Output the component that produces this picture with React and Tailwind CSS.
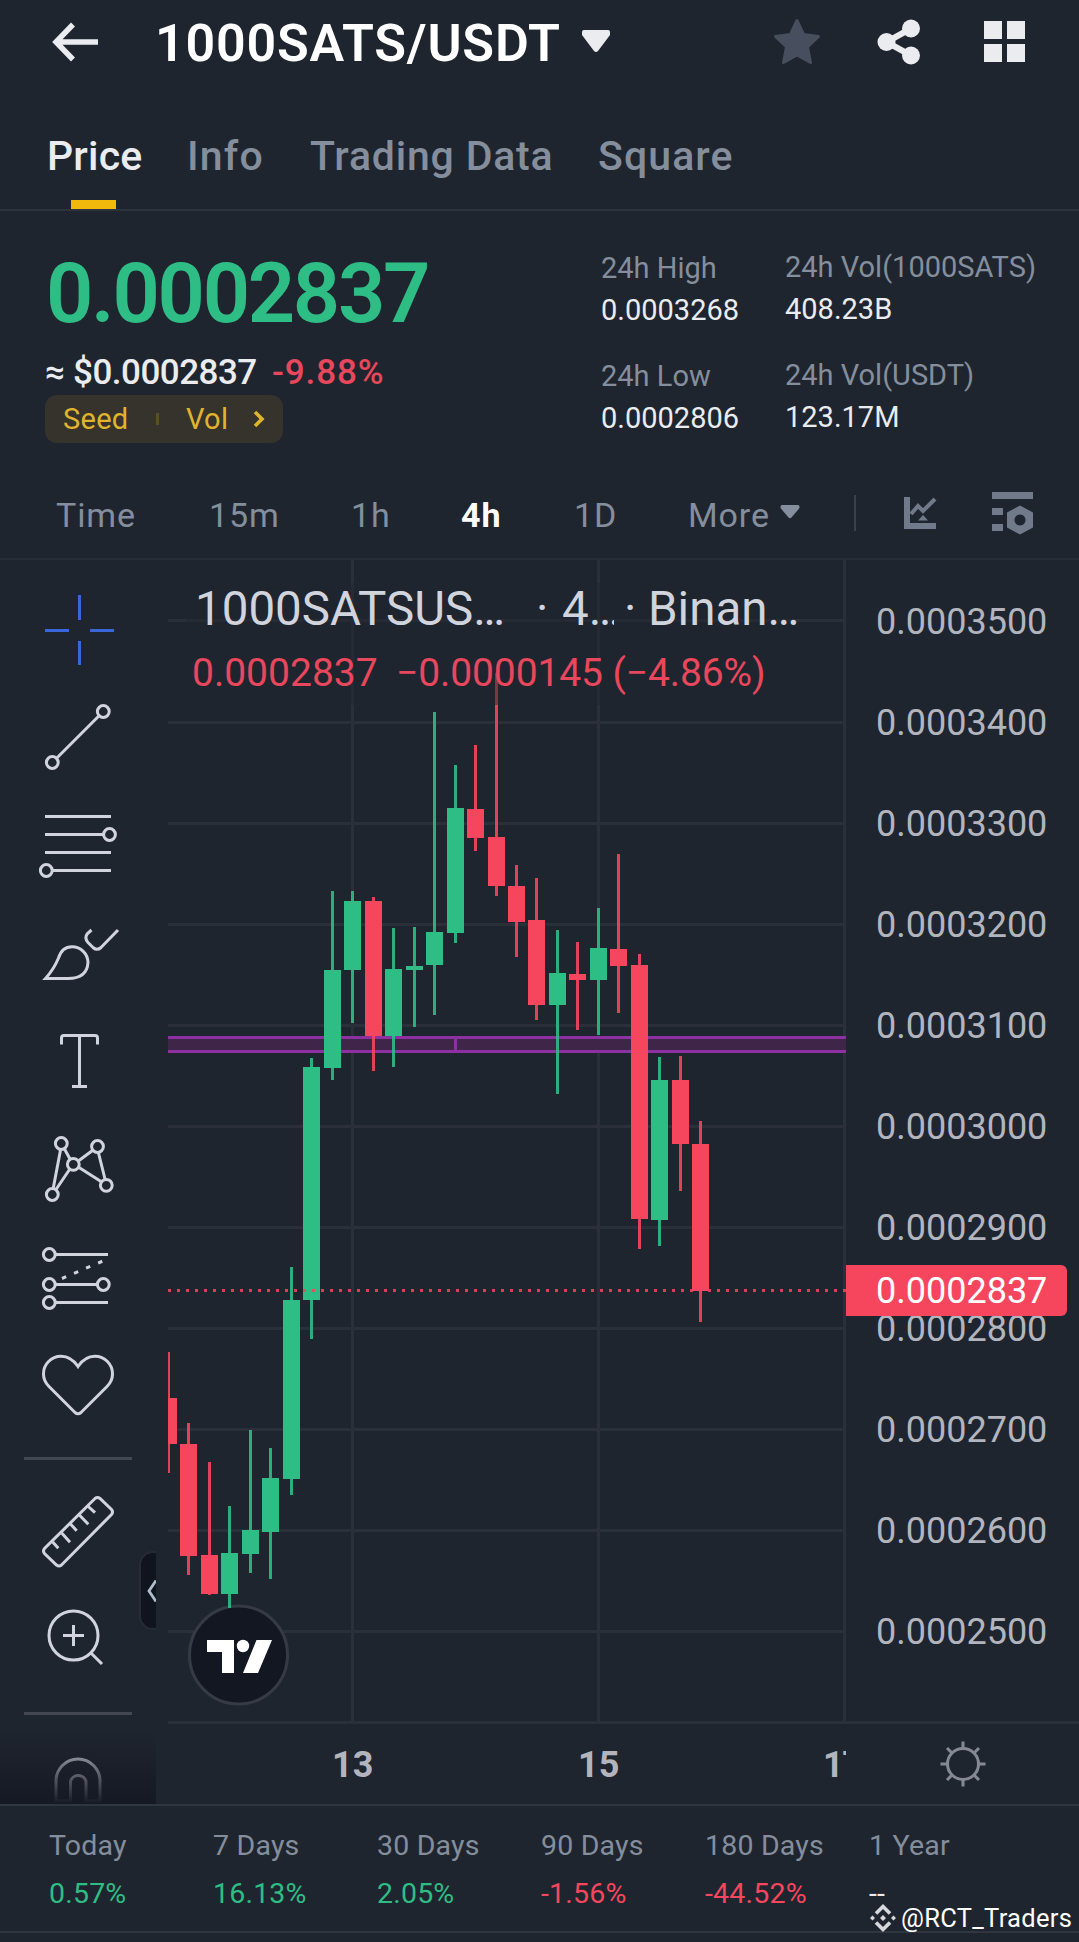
import React from 'react';

const UP = '#2ebd85';
const DOWN = '#f6465d';

const tabs = [
  { label: 'Price', cls: 'w-[140px] tracking-[0.2px] text-[#eaecef]', active: true },
  { label: 'Info', cls: 'w-[123px] tracking-[1.2px] text-[#848e9c]' },
  { label: 'Trading Data', cls: 'w-[288px] tracking-[0.8px] text-[#848e9c]' },
  { label: 'Square', cls: 'tracking-[1.1px] text-[#848e9c]' },
];

const priceLevels = [
  '0.0003500',
  '0.0003400',
  '0.0003300',
  '0.0003200',
  '0.0003100',
  '0.0003000',
  '0.0002900',
  '0.0002800',
  '0.0002700',
  '0.0002600',
  '0.0002500',
];

// [left, wick top, body top, body bottom, wick bottom, rising]
const candles = [
  [160, 1352, 1398, 1444, 1473, 0],
  [180, 1423, 1444, 1556, 1575, 0],
  [201, 1462, 1555, 1594, 1595, 0],
  [221, 1506, 1553, 1594, 1608, 1],
  [242, 1430, 1530, 1554, 1573, 1],
  [262, 1448, 1478, 1532, 1579, 1],
  [283, 1267, 1300, 1479, 1495, 1],
  [303, 1058, 1067, 1300, 1339, 1],
  [324, 891, 970, 1068, 1080, 1],
  [344, 891, 901, 970, 1023, 1],
  [365, 897, 901, 1036, 1071, 0],
  [385, 928, 969, 1036, 1067, 1],
  [406, 927, 966, 970, 1027, 1],
  [426, 712, 932, 965, 1015, 1],
  [447, 765, 808, 933, 943, 1],
  [467, 745, 809, 838, 851, 0],
  [488, 673, 837, 886, 896, 0],
  [508, 865, 886, 922, 957, 0],
  [528, 878, 920, 1005, 1020, 0],
  [549, 930, 973, 1005, 1094, 1],
  [569, 942, 974, 980, 1030, 0],
  [590, 908, 948, 980, 1035, 1],
  [610, 854, 949, 966, 1013, 0],
  [631, 954, 965, 1219, 1249, 0],
  [651, 1057, 1080, 1220, 1246, 1],
  [672, 1056, 1080, 1144, 1191, 0],
  [692, 1121, 1144, 1291, 1322, 0],
];

const performance = [
  { label: 'Today', value: '0.57%', cls: 'text-[#2ebd85]' },
  { label: '7 Days', value: '16.13%', cls: 'text-[#2ebd85]' },
  { label: '30 Days', value: '2.05%', cls: 'text-[#2ebd85]' },
  { label: '90 Days', value: '-1.56%', cls: 'text-[#f6465d]' },
  { label: '180 Days', value: '-44.52%', cls: 'text-[#f6465d]' },
  { label: '1 Year', value: '--', cls: 'text-[#eaecef]' },
];

const Header = () => (
  <header className="flex h-[83px] items-center pl-[50px] text-[#eaecef]">
    <svg className="h-[48px] w-[50px]" viewBox="50 17 50 48" fill="none" stroke="currentColor" strokeWidth="5.5">
      <path d="M98 41H58M73 23.500L56 41l17 17.500" />
    </svg>
    <h1 className="ml-[55px] w-[405px] whitespace-nowrap pt-[5px] text-[52px] font-semibold leading-[60px] tracking-[0.8px] text-white">
      1000SATS/USDT
    </h1>
    <svg className="ml-[20px] h-[24px] w-[32px]" viewBox="580 30 32 24" fill="currentColor">
      <path d="M584 30h24q2 0 2 2v3l-12 16q-2 2-4 0l-12-16v-3q0-2 2-2z" />
    </svg>
    <svg className="ml-[159px] h-[48px] w-[50px] text-[#474f5e]" viewBox="771 17 50 48" fill="currentColor" stroke="currentColor" strokeWidth="3" strokeLinejoin="round">
      <path d="M797 19.500l6.500 14 15 2-11 10.500 3 15.500-13.500-7.500-13.500 7.500 3-15.500-11-10.500 15-2z" />
    </svg>
    <svg className="ml-[54px] h-[48px] w-[48px]" viewBox="875 17 48 48" fill="currentColor">
      <circle cx="911" cy="27.500" r="9" />
      <circle cx="911" cy="54.500" r="9" />
      <circle cx="886.500" cy="41" r="9" />
      <path d="M911 27.500L886.500 41l24.500 13.500" fill="none" stroke="currentColor" strokeWidth="6" />
    </svg>
    <div className="ml-[61px] grid grid-cols-[18px_18px] gap-[5px]">
      <span className="h-[18px] bg-[#eaecef]" />
      <span className="h-[18px] bg-[#eaecef]" />
      <span className="h-[18px] bg-[#eaecef]" />
      <span className="h-[18px] bg-[#eaecef]" />
    </div>
  </header>
);

const Tabs = () => (
  <nav className="flex h-[128px] border-b-2 border-[#2d333d] pl-[47px] pt-[48px] text-[41px] font-medium leading-[50px]">
    {tabs.map((tab) => (
      <div key={tab.label} className={`flex shrink-0 flex-col justify-between ${tab.cls}`}>
        <span className="whitespace-nowrap">{tab.label}</span>
        {tab.active && <span className="ml-[24px] h-[9px] w-[45px] bg-[#f0b90b]" />}
      </div>
    ))}
  </nav>
);

const Stat = ({ label, value }) => (
  <div className="leading-[42px]">
    <div className="whitespace-nowrap text-[#848e9c]">{label}</div>
    <div className="whitespace-nowrap text-[#eaecef]">{value}</div>
  </div>
);

const Summary = () => (
  <section className="flex h-[261px] text-[29px]">
    <div className="w-[601px] pl-[45px] pt-[43px]">
      <div className="pl-[1px] text-[83px] font-semibold leading-[80px] tracking-[-2.3px] text-[#2ebd85]">0.0002837</div>
      <div className="mt-[16px] flex text-[35px] font-medium leading-[45px]">
        <span className="w-[28px] text-[#eaecef]">≈</span>
        <span className="w-[199px] tracking-[-0.5px] text-[#eaecef]">$0.0002837</span>
        <span className="tracking-[0.9px] text-[#e8475c]">-9.88%</span>
      </div>
      <div className="flex h-[48px] w-[238px] items-center rounded-[12px] bg-[#35332c] pl-[18px] text-[#e0b42d]">
        <span className="w-[93px] pt-[2px] tracking-[0.3px]">Seed</span>
        <span className="h-[12px] w-[3px] bg-[#5b4f2a]" />
        <span className="ml-[27px] w-[67px] pt-[2px] tracking-[0.3px]">Vol</span>
        <svg className="h-[18px] w-[12px]" viewBox="0 0 12 18" fill="none" stroke="currentColor" strokeWidth="3.600">
          <path d="M2 2l7 7-7 7" />
        </svg>
      </div>
    </div>
    <div className="flex w-[184px] flex-col gap-[24px] pt-[36px]">
      <Stat label="24h High" value="0.0003268" />
      <Stat label="24h Low" value="0.0002806" />
    </div>
    <div className="flex flex-col gap-[24px] pt-[35px]">
      <Stat label="24h Vol(1000SATS)" value="408.23B" />
      <Stat label="24h Vol(USDT)" value="123.17M" />
    </div>
  </section>
);

const IntervalBar = () => (
  <div className="flex h-[88px] items-center border-b-2 border-[#272d37] pl-[56px] text-[34px] tracking-[0.9px] text-[#848e9c]">
    <span className="w-[153px]">Time</span>
    <span className="w-[142px]">15m</span>
    <span className="w-[110px]">1h</span>
    <span className="w-[113px] font-bold text-white">4h</span>
    <span className="w-[114px]">1D</span>
    <span className="w-[92px]">More</span>
    <svg className="mb-[7px] h-[14px] w-[20px]" viewBox="780 505 20 14" fill="currentColor">
      <path d="M782 505h16q1.500 0 1.500 2v1l-8 9.500q-1.500 1.500-3 0l-8-9.500v-1q0-2 1.500-2z" />
    </svg>
    <span className="mb-[5px] ml-[54px] h-[36px] w-[2px] bg-[#3a414c]" />
    <svg className="mb-[5px] ml-[46px] h-[36px] w-[36px] text-[#717a8a]" viewBox="903 494 36 36" fill="currentColor">
      <path d="M905 496h6v26h26v6h-32z" />
      <path d="M912 513l7-8 5 5 12-12" fill="none" stroke="currentColor" strokeWidth="4" />
      <path d="M924 514l5 5.500h-10z" />
    </svg>
    <svg className="mb-[4px] ml-[52px] h-[44px] w-[46px] text-[#717a8a]" viewBox="991 491 46 44" fill="currentColor">
      <path d="M993 492h41v7h-41zM993 508h11v7h-11zM993 524h11v7h-11z" />
      <path d="M1021 505.500l13 7v15l-13 7-13-7v-15zM1021 514.500a5.500 5.500 0 1 0 .01 0z" fillRule="evenodd" />
    </svg>
  </div>
);

const Node = ({ x, y }) => <circle cx={x} cy={y} r="5.900" />;

const Toolbar = () => (
  <aside className="relative flex h-full w-[156px] flex-col overflow-hidden">
    <svg className="h-[1244px] w-[156px]" viewBox="0 560 156 1244" fill="none" stroke="#d1d4dc" strokeWidth="3">
      {/* crosshair */}
      <path d="M79.500 595v25M79.500 641v24M45 630.500h24M90 630.500h24" stroke="#3a66db" />
      {/* trend line */}
      <Node x="103.300" y="711.500" />
      <Node x="52.300" y="762.500" />
      <path d="M56.800 758L98.800 716" />
      {/* fib retracement */}
      <path d="M45 816.500h66M45 834.500h58.500M45 852.500h66M52.500 870.500H111" />
      <Node x="109.500" y="834.500" />
      <Node x="46.300" y="870.500" />
      {/* brush */}
      <path d="M91.500 930L87.500 933.500Q84 938 88 942.500L93 947.500Q97 951 101 947.500L118 930" />
      <path d="M45.500 978.500Q54 969 58.500 958Q62 946.700 72 946.700A16 16 0 0 1 88 962.500Q87 978.500 68 978.500Z" />
      {/* text */}
      <path d="M61.500 1044.500V1038Q61.500 1035.500 64 1035.500H95Q97.500 1035.500 97.500 1038V1044.500M79.500 1035.500V1086.500M72 1086.500H87" />
      {/* pattern */}
      <Node x="61.300" y="1143.500" />
      <Node x="97.500" y="1146.500" />
      <Node x="73.300" y="1164.300" />
      <Node x="106.300" y="1185.300" />
      <Node x="52.300" y="1194.500" />
      <path d="M64.500 1149L70 1159M79 1160.500L92.500 1150.500M98.500 1153L105 1179M79 1167.500L101 1181.500M69.500 1169.500L56 1189.500M60.500 1150L53.300 1188" />
      {/* projection */}
      <Node x="49.300" y="1254.500" />
      <Node x="49.300" y="1284.500" />
      <Node x="103.300" y="1284.500" />
      <Node x="49.300" y="1302.500" />
      <path d="M56 1254.500H108M56 1284.500H97M56 1302.500H108" />
      <path d="M62 1278.500L104 1260.500" strokeDasharray="4.500 8.600" />
      {/* favourites */}
      <path d="M78 1366.500C73 1359 67 1356.300 61 1356.300A17.500 17.500 0 0 0 43.500 1374Q43.500 1381 49 1386.500L75 1412.500Q78 1415 81 1412.500L107 1386.500Q112.500 1381 112.500 1374A17.500 17.500 0 0 0 95 1356.300C89 1356.300 83 1359 78 1366.500Z" />
      <path d="M24 1458.500H132" stroke="#434751" />
      {/* ruler */}
      <path d="M95 1498.500Q97.500 1496.500 100 1498.500L111.500 1509.500Q113.500 1512 111.500 1514.500L61.500 1565Q59 1567 56.500 1565L44.500 1553.500Q42.500 1551 44.500 1548.500Z" />
      <path d="M87.700 1506L95 1512.700M79.300 1515L88.300 1524.300M70 1523.500L76.700 1530.700M61.700 1533L70 1542.300M52.700 1542L58.300 1548.300" />
      {/* zoom in */}
      <circle cx="73.500" cy="1635.500" r="24.500" />
      <path d="M63 1635.500H84M73.500 1625V1646M90.700 1652.700L102 1664" />
      <path d="M24 1713.500H132" stroke="#434751" />
      {/* magnet */}
      <path d="M56 1801V1781A22 22 0 0 1 100 1781V1801H86V1781.500A8 8 0 0 0 70.500 1781.500V1801Z" />
    </svg>
    <div className="absolute bottom-0 left-0 h-[76px] w-[156px] bg-linear-to-b from-[#151924]/0 to-[#151924]" />
    <div className="absolute left-[139px] top-[991px] flex h-[79px] w-[30px] items-center rounded-l-[14px] border-2 border-[#262b35] bg-[#10141f] pl-[6px]">
      <svg className="h-[24px] w-[12px]" viewBox="0 0 12 24" fill="none" stroke="#adbfca" strokeWidth="2.800">
        <path d="M9 1.500L2 12l7 10.500" />
      </svg>
    </div>
  </aside>
);

const Candle = ({ candle }) => {
  const [x, high, top, bottom, low, rising] = candle;
  const color = rising ? UP : DOWN;
  return (
    <g fill={color}>
      <rect x={x + 7} y={high} width="3" height={low - high} opacity="0.9" />
      <rect x={x} y={top} width="17" height={bottom - top} />
    </g>
  );
};

const Plot = () => (
  <svg className="h-[1164px] w-[678px]" viewBox="168 560 678 1164">
    <g fill="#2a2f39">
      {priceLevels.map((level, i) => (
        <rect key={level} x="168" y={Math.round(619.4 + i * 101.1)} width="678" height="3" />
      ))}
      <rect x="351" y="560" width="3" height="1162" />
      <rect x="597" y="560" width="3" height="1162" />
      <rect x="843" y="560" width="3" height="1162" />
      <rect x="168" y="1721" width="678" height="3" />
    </g>
    <circle cx="238.500" cy="1655" r="49" fill="#131722" stroke="#363a45" strokeWidth="3" />
    <g fill="#ffffff">
      <path d="M207 1640h27v33h-12v-21h-15z" />
      <circle cx="243" cy="1646" r="6.200" />
      <path d="M256.500 1640H272L258 1673H243z" />
    </g>
    <rect x="168" y="1037" width="678" height="15" fill="#3f2548" />
    <g fill="#8d30a2">
      <rect x="168" y="1036" width="678" height="3" />
      <rect x="168" y="1050" width="678" height="3" />
      <rect x="454" y="1038" width="3" height="13" />
    </g>
    {candles.map((candle) => (
      <Candle key={candle[0]} candle={candle} />
    ))}
    <path d="M168 1290.500H846" stroke={DOWN} strokeWidth="3" strokeDasharray="3 6" opacity="0.85" />
    <rect x="186" y="583" width="610" height="122" fill="#1f252f" opacity="0.5" />
  </svg>
);

const Legend = () => (
  <div className="absolute left-[24px] top-[21px] whitespace-nowrap">
    <div className="flex pl-[3px] text-[47.500px] leading-[56px] text-[#d1d4dc]">
      <span className="w-[341px]">1000SATSUS…</span>
      <span className="w-[26px]">·</span>
      <span className="w-[52px] overflow-hidden">4…</span>
      <span className="ml-[10px] w-[24px]">·</span>
      <span>Binan…</span>
    </div>
    <div className="mt-[8px] flex text-[39px] leading-[56px] text-[#e8475c]">
      <span className="w-[204px]">0.0002837</span>
      <span className="tracking-[-0.1px]">−0.0000145 (−4.86%)</span>
    </div>
  </div>
);

const Chart = () => (
  <section className="flex h-[1244px]">
    <Toolbar />
    <div className="relative ml-[12px] flex w-[678px] flex-col overflow-hidden">
      <Plot />
      <Legend />
      <div className="flex h-[80px] items-center pt-[2px] text-[36px] font-bold text-[#b2b5be]">
        <span className="ml-[164px] w-[41px] text-center">13</span>
        <span className="ml-[205px] w-[41px] text-center">15</span>
        <span className="ml-[204px] w-[41px] shrink-0 tracking-[-1.5px]">17</span>
      </div>
    </div>
    <div className="relative flex w-[233px] flex-col text-[36px] text-[#b2b5be]">
      <div className="h-[1164px] border-b-[3px] border-[#2a2f39] pl-[30px] pt-[11px]">
        {priceLevels.map((level) => (
          <div key={level} className="flex h-[101.1px] items-center">
            {level}
          </div>
        ))}
      </div>
      <div className="absolute left-0 top-[705px] flex h-[51px] w-[221px] items-center rounded-r-[6px] bg-[#f6465d] pl-[30px] pt-[1px] text-white">
        0.0002837
      </div>
      <div className="flex h-[80px] items-center pl-[94px]">
        <svg className="h-[46px] w-[46px]" viewBox="-23 -23 46 46" fill="none" stroke="#868993" strokeWidth="3">
          <circle r="15.500" />
          <path d="M0-15.500V-22.500M0 15.500V22.500M-15.500 0H-22.500M15.500 0H22.500M-11-11l-5-5M11-11l5-5M-11 11l-5 5M11 11l5 5" />
        </svg>
      </div>
    </div>
  </section>
);

const Performance = () => (
  <footer className="flex h-[129px] border-y-2 border-[#2f3640] pl-[49px] pt-[16px] text-[28.500px] leading-[48px] tracking-[0.2px]">
    {performance.map((item) => (
      <div key={item.label} className="w-[164px] shrink-0 whitespace-nowrap">
        <div className="text-[#848e9c]">{item.label}</div>
        <div className={item.cls}>{item.value}</div>
      </div>
    ))}
  </footer>
);

const Watermark = () => (
  <div className="absolute bottom-[9px] left-[868px] flex items-center text-[25.500px] leading-[30px] tracking-[0.3px] text-white">
    <svg className="h-[30px] w-[30px]" viewBox="0 0 30 30" fill="none" stroke="#d6d8db" strokeWidth="3.600">
      <path d="M8 10.500L15 3.500L22 10.500M8 19.500L15 26.500L22 19.500" />
      <path d="M15 12l3 3-3 3-3-3zM4.500 12.500L7 15l-2.500 2.500L2 15zM25.500 12.500L28 15l-2.500 2.500L23 15z" fill="#d6d8db" stroke="none" />
    </svg>
    <span className="ml-[3px]">@RCT_Traders</span>
  </div>
);

export default function App() {
  return (
    <main className="relative h-[1942px] w-[1079px] overflow-hidden bg-[#1f252f] font-['Roboto',sans-serif]">
      <Header />
      <Tabs />
      <Summary />
      <IntervalBar />
      <Chart />
      <Performance />
      <Watermark />
    </main>
  );
}
